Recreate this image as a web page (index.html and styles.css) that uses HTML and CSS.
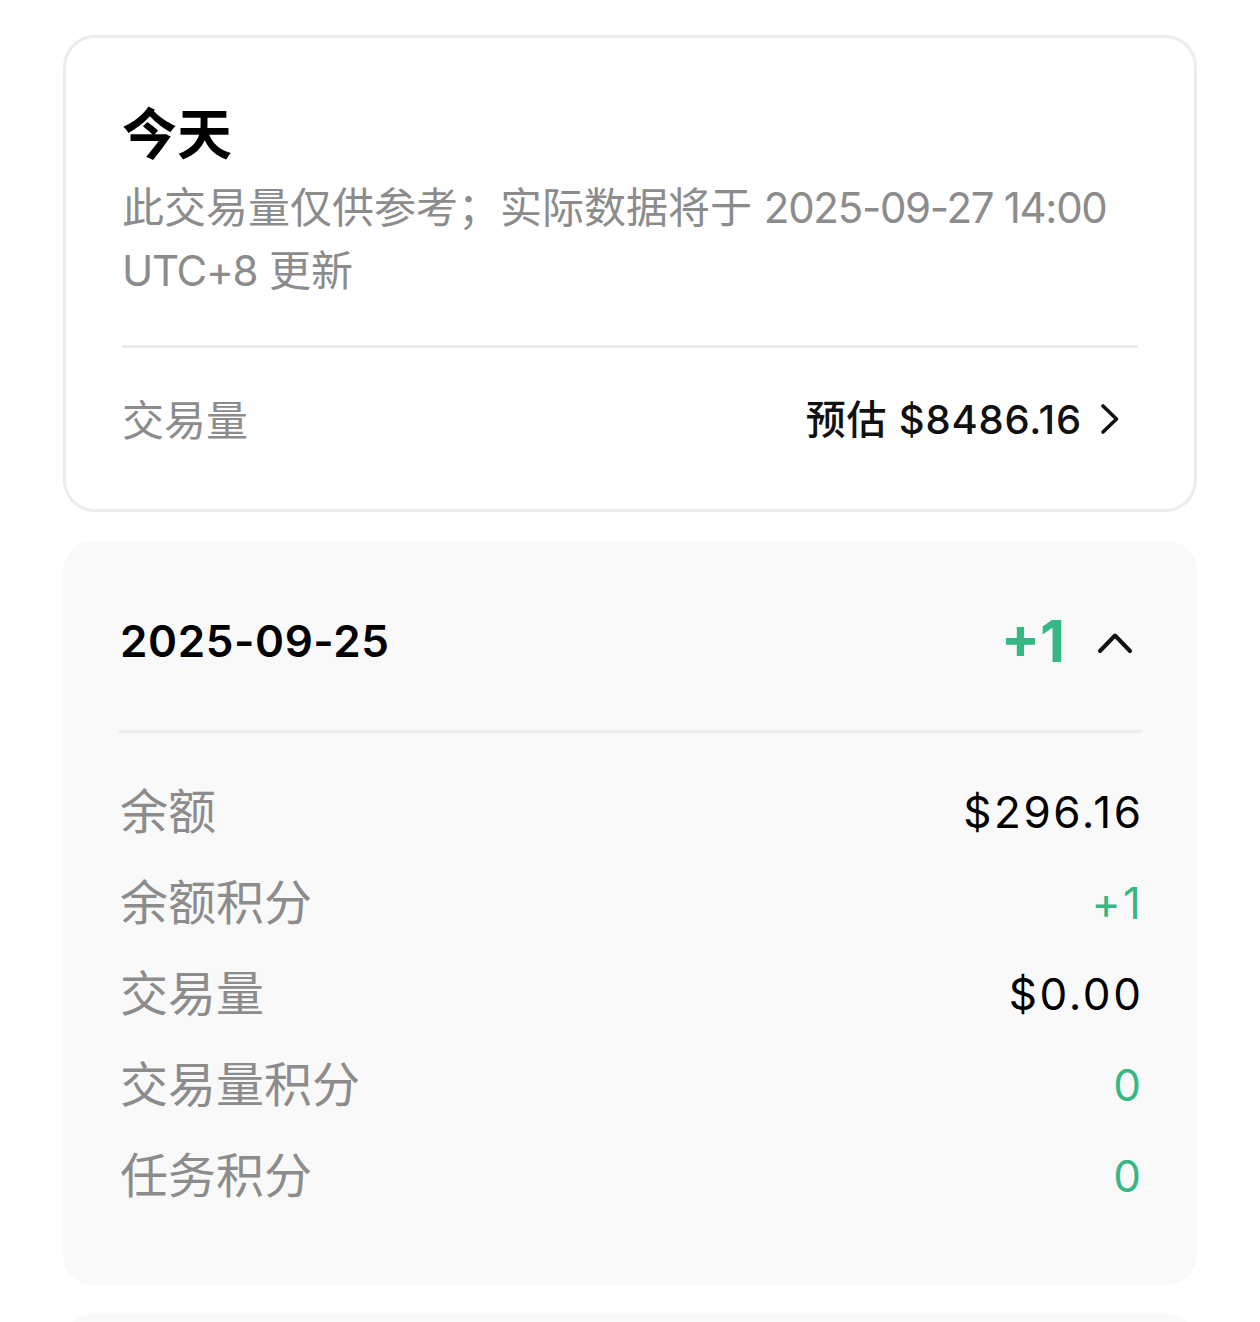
FILE: index.html
```html
<!DOCTYPE html>
<html lang="zh-CN">
<head>
<meta charset="utf-8">
<title>积分记录</title>
<link rel="stylesheet" href="styles.css">
</head>
<body>
<main class="page">
  <section class="card today">
    <h1 class="title">今天</h1>
    <p class="note">此交易量仅供参考；实际数据将于 <span class="latin">2025-09-27 14:00</span> <span class="latin">UTC+8</span> 更新</p>
    <div class="divider"></div>
    <div class="today-row">
      <span class="label">交易量</span>
      <span class="estimate">
        <span class="estimate-text">预估 $8486.16</span>
        <svg class="chev-right" width="40" height="40" viewBox="0 0 40 40" aria-hidden="true">
          <path d="M5 9 L18.5 22 L5 35" fill="none" stroke="#111" stroke-width="3.6" stroke-linecap="round" stroke-linejoin="round"/>
        </svg>
      </span>
    </div>
  </section>

  <section class="card day">
    <div class="day-head">
      <span class="date">2025-09-25</span>
      <span class="day-total">
        <span class="total">+1</span>
        <svg class="chev-up" width="48" height="48" viewBox="0 0 48 48" aria-hidden="true">
          <path d="M7 34 L22 18.5 L37 34" fill="none" stroke="#111" stroke-width="4" stroke-linecap="round" stroke-linejoin="round"/>
        </svg>
      </span>
    </div>
    <div class="divider"></div>
    <ul class="rows">
      <li class="row"><span class="label">余额</span><span class="value">$296.16</span></li>
      <li class="row"><span class="label">余额积分</span><span class="value green">+1</span></li>
      <li class="row"><span class="label">交易量</span><span class="value">$0.00</span></li>
      <li class="row"><span class="label">交易量积分</span><span class="value green">0</span></li>
      <li class="row"><span class="label">任务积分</span><span class="value green">0</span></li>
    </ul>
  </section>

  <section class="card day next"></section>
</main>
</body>
</html>
```

FILE: styles.css
```css
* { box-sizing: border-box; }

html, body {
  margin: 0;
  padding: 0;
  background: #ffffff;
}

body {
  font-family: "Inter", "Noto Sans CJK SC", sans-serif;
  color: #111111;
  overflow: hidden;
}

.page {
  padding: 35px 63px 0;
  display: flex;
  flex-direction: column;
  gap: 29px;
}

.card {
  border-radius: 32px;
}

.today {
  border: 3px solid #ececec;
  background: #ffffff;
  padding: 64px 56px 60px;
}

.title {
  margin: 0;
  font-size: 55px;
  line-height: 64px;
  font-weight: 700;
  color: #000000;
}

.note {
  margin: 10px 0 0;
  font-size: 42px;
  line-height: 63px;
  color: #8c8c8c;
}

.note .latin {
  letter-spacing: -1.3px;
}

.divider {
  height: 3px;
  background: #ececec;
}

.today .divider {
  margin-top: 43px;
}

.today-row {
  margin-top: 37px;
  height: 64px;
  display: flex;
  align-items: center;
  justify-content: space-between;
}

.today-row .label {
  font-size: 42px;
  color: #8c8c8c;
}

.estimate {
  display: flex;
  align-items: center;
  gap: 16px;
}

.estimate-text {
  font-size: 40px;
  font-weight: 500;
  letter-spacing: 0.8px;
  color: #111111;
}

.chev-right { display: block; }

.day {
  background: #f9f9f9;
  border-radius: 30px;
  padding: 70px 56px 64px;
}

.day-head {
  height: 60px;
  display: flex;
  align-items: center;
  justify-content: space-between;
}

.date {
  font-size: 44px;
  font-weight: 600;
  letter-spacing: 0.6px;
  color: #000000;
  padding-left: 1px;
}

.day-total {
  display: flex;
  align-items: center;
  gap: 28px;
}

.total {
  font-size: 58px;
  font-weight: 700;
  color: #36b884;
}

.chev-up { display: block; }

.day .divider {
  margin-top: 59px;
}

.rows {
  list-style: none;
  margin: 33px 0 0;
  padding: 0;
}

.row {
  height: 91px;
  display: flex;
  align-items: center;
  justify-content: space-between;
}

.row .label {
  font-size: 48px;
  line-height: 60px;
  color: #8c8c8c;
  padding-left: 1px;
}

.row .value {
  font-size: 44px;
  line-height: 60px;
  letter-spacing: 2.6px;
  margin-right: -2.6px;
  color: #000000;
}

.row .value.green {
  color: #36b884;
}

.next {
  height: 300px;
  padding: 0;
}
```
